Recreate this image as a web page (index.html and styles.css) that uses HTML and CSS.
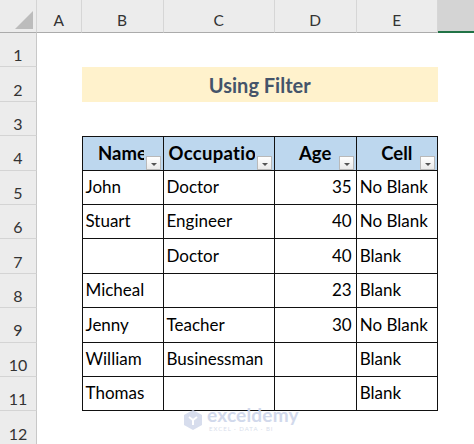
FILE: index.html
```html
<!DOCTYPE html>
<html>
<head>
<meta charset="utf-8">
<link rel="stylesheet" href="styles.css">
</head>
<body>
<div class="sheet">
  <div class="corner"><span class="tri"></span></div>
  <div class="ch">A</div>
  <div class="ch">B</div>
  <div class="ch">C</div>
  <div class="ch">D</div>
  <div class="ch">E</div>
  <div class="ch sel"></div>

  <div class="rh">1</div><div class="empty span6"></div>

  <div class="rh">2</div><div class="empty"></div>
  <div class="band">Using Filter</div><div class="empty"></div>

  <div class="rh">3</div><div class="empty span6"></div>

  <div class="rh">4</div><div class="empty"></div>
  <div class="th first"><div class="clip"><span class="lbl">Name</span></div><span class="dd"></span></div>
  <div class="th left"><div class="clip"><span class="lbl">Occupation</span></div><span class="dd"></span></div>
  <div class="th"><div class="clip"><span class="lbl">Age</span></div><span class="dd"></span></div>
  <div class="th"><div class="clip"><span class="lbl">Cell</span></div><span class="dd"></span></div>
  <div class="empty"></div>

  <div class="rh">5</div><div class="empty"></div>
  <div class="td first">John</div><div class="td">Doctor</div><div class="td num">35</div><div class="td">No Blank</div>
  <div class="empty"></div>

  <div class="rh">6</div><div class="empty"></div>
  <div class="td first">Stuart</div><div class="td">Engineer</div><div class="td num">40</div><div class="td">No Blank</div>
  <div class="empty"></div>

  <div class="rh">7</div><div class="empty"></div>
  <div class="td first"></div><div class="td">Doctor</div><div class="td num">40</div><div class="td">Blank</div>
  <div class="empty"></div>

  <div class="rh">8</div><div class="empty"></div>
  <div class="td first">Micheal</div><div class="td"></div><div class="td num">23</div><div class="td">Blank</div>
  <div class="empty"></div>

  <div class="rh">9</div><div class="empty"></div>
  <div class="td first">Jenny</div><div class="td">Teacher</div><div class="td num">30</div><div class="td">No Blank</div>
  <div class="empty"></div>

  <div class="rh">10</div><div class="empty"></div>
  <div class="td first">William</div><div class="td">Businessman</div><div class="td num"></div><div class="td">Blank</div>
  <div class="empty"></div>

  <div class="rh">11</div><div class="empty"></div>
  <div class="td first">Thomas</div><div class="td"></div><div class="td num"></div><div class="td">Blank</div>
  <div class="empty"></div>

  <div class="rh">12</div><div class="empty span6"></div>

  <div class="watermark">
    <svg class="wm-icon" width="20" height="22" viewBox="0 0 20 22">
      <path d="M10 1 L19 6 L19 16 L10 21 L1 16 L1 6 Z" fill="#d3daec"/>
      <path d="M6 8 L10 11 L14 8 M10 11 L10 16" stroke="#ffffff" stroke-width="2" fill="none"/>
    </svg>
    <div class="wm-text">
      <span class="wm-name">exceldemy</span>
      <span class="wm-sub">EXCEL · DATA · BI</span>
    </div>
  </div>
</div>
</body>
</html>
```

FILE: styles.css
```css
html, body {
  margin: 0;
  padding: 0;
  background: #ffffff;
}

.sheet {
  position: relative;
  width: 474px;
  height: 444px;
  overflow: hidden;
  display: grid;
  grid-template-columns: 37px 44.5px 82px 111.2px 82px 81.3px 1fr;
  grid-template-rows: 33px;
  grid-auto-rows: 34.4px;
  font-family: Lato, "Open Sans", sans-serif;
  color: #000;
}

.corner {
  position: relative;
  background: #ececec;
  border-right: 1px solid #d4d4d4;
  border-bottom: 1px solid #ababab;
}

.tri {
  position: absolute;
  right: 3px;
  bottom: 3px;
  width: 0;
  height: 0;
  border-left: 18px solid transparent;
  border-bottom: 18px solid #bcbcbc;
}

.ch {
  background: #ececec;
  border-right: 1px solid #d6d6d6;
  border-bottom: 1px solid #ababab;
  display: flex;
  align-items: flex-end;
  justify-content: center;
  padding-bottom: 2px;
  font-size: 15.5px;
  line-height: 1.2;
  color: #333;
}

.ch.sel {
  background: #d4d4d4;
  border-right: none;
  border-bottom: 2px solid #217346;
}

.rh {
  grid-column: 1;
  background: #ececec;
  border-right: 1px solid #c8c8c8;
  border-bottom: 1px solid #d4d4d4;
  display: flex;
  align-items: flex-end;
  justify-content: center;
  padding-bottom: 2px;
  font-size: 16px;
  line-height: 1.2;
  color: #333;
}

.span6 {
  grid-column: span 6;
}

.band {
  grid-column: span 4;
  background: #fff2cc;
  display: flex;
  align-items: center;
  justify-content: center;
  font-size: 20px;
  font-weight: 700;
  color: #44546a;
  line-height: 1.2;
  padding-top: 1px;
}

.th,
.td {
  position: relative;
  display: flex;
  align-items: center;
  overflow: hidden;
  white-space: nowrap;
  border-right: 1px solid #111;
  border-bottom: 1px solid #111;
  line-height: 1.2;
}

.th {
  background: #bdd7ee;
  font-weight: 700;
  font-size: 18.5px;
  align-items: stretch;
  border-top: 1px solid #111;
}

.clip {
  flex: 1;
  min-width: 0;
  margin-right: 19px;
  overflow: hidden;
  display: flex;
}

.lbl {
  flex: 0 0 calc(100% + 19px);
  box-sizing: border-box;
  display: flex;
  align-items: center;
  justify-content: center;
  padding: 0 4px;
}

.th.left .lbl {
  justify-content: flex-start;
  padding-left: 5px;
  letter-spacing: 0.3px;
}

.td {
  font-size: 17px;
  padding: 0 4px 0 3px;
}

.first {
  border-left: 1px solid #111;
}

.num {
  justify-content: flex-end;
}

.dd {
  position: absolute;
  z-index: 2;
  right: 2px;
  bottom: 0;
  width: 15px;
  height: 14px;
  box-sizing: border-box;
  border: 1px solid #b9b9b9;
  background: linear-gradient(#ffffff, #eaeaea);
}

.dd::after {
  content: "";
  position: absolute;
  left: 4px;
  bottom: 3px;
  width: 0;
  height: 0;
  border-left: 3px solid transparent;
  border-right: 3px solid transparent;
  border-top: 3px solid #555;
}

.watermark {
  position: absolute;
  left: 183px;
  top: 407px;
  display: flex;
  align-items: center;
  gap: 4px;
  opacity: 0.9;
}

.wm-text {
  display: flex;
  flex-direction: column;
  gap: 3px;
}

.wm-name {
  font-family: Lato, sans-serif;
  font-weight: 700;
  font-size: 19px;
  line-height: 16px;
  color: #cdd5ea;
  letter-spacing: 0.2px;
}

.wm-sub {
  font-family: Lato, sans-serif;
  font-size: 6px;
  line-height: 6px;
  color: #d5dbea;
  letter-spacing: 1px;
  padding-left: 2px;
}
```
